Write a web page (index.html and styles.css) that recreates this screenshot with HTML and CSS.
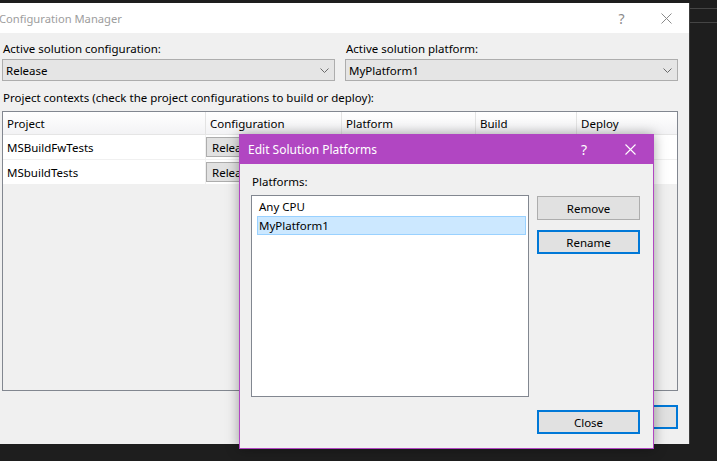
FILE: index.html
```html
<!DOCTYPE html>
<html>
<head>
<meta charset="utf-8">
<link rel="stylesheet" href="styles.css">
</head>
<body>
<div class="desk">
  <div class="bgwin"></div>
  <div class="win">
    <div class="titlebar">
      <span class="title">Configuration Manager</span>
      <div class="tb-btns">
        <span class="tb-btn help">?</span>
        <span class="tb-btn"><svg width="11" height="11" viewBox="0 0 11 11"><path d="M0.5 0.5L10.5 10.5M10.5 0.5L0.5 10.5" stroke="#8a8a8a" stroke-width="1" fill="none"/></svg></span>
      </div>
    </div>
    <div class="content">
      <div class="selectors">
        <div class="field">
          <div class="label">Active solution configuration:</div>
          <div class="combo"><span>Release</span><svg width="9" height="5" viewBox="0 0 9 5"><path d="M0.5 0.5L4.5 4.5L8.5 0.5" stroke="#6a6a6a" fill="none"/></svg></div>
        </div>
        <div class="field">
          <div class="label">Active solution platform:</div>
          <div class="combo"><span>MyPlatform1</span><svg width="9" height="5" viewBox="0 0 9 5"><path d="M0.5 0.5L4.5 4.5L8.5 0.5" stroke="#6a6a6a" fill="none"/></svg></div>
        </div>
      </div>
      <div class="label ctx">Project contexts (check the project configurations to build or deploy):</div>
      <div class="grid">
        <div class="row head">
          <div class="cell">Project</div>
          <div class="cell">Configuration</div>
          <div class="cell">Platform</div>
          <div class="cell">Build</div>
          <div class="cell last">Deploy</div>
        </div>
        <div class="row">
          <div class="cell">MSBuildFwTests</div>
          <div class="cell cfg"><div class="cellcombo">Release</div></div>
          <div class="cell"></div>
          <div class="cell"></div>
          <div class="cell last"></div>
        </div>
        <div class="row">
          <div class="cell">MSbuildTests</div>
          <div class="cell cfg"><div class="cellcombo">Release</div></div>
          <div class="cell"></div>
          <div class="cell"></div>
          <div class="cell last"></div>
        </div>
      </div>
      <div class="footer">
        <div class="btn focus main-close">Close</div>
      </div>
    </div>
  </div>

  <div class="dialog">
    <div class="dtitlebar">
      <span class="dtitle">Edit Solution Platforms</span>
      <div class="dtb-btns">
        <span class="dtb-btn help">?</span>
        <span class="dtb-btn"><svg width="11" height="11" viewBox="0 0 11 11"><path d="M0.5 0.5L10.5 10.5M10.5 0.5L0.5 10.5" stroke="#ffffff" stroke-width="1.1" fill="none"/></svg></span>
      </div>
    </div>
    <div class="dcontent">
      <div class="dmain">
        <div class="dleft">
          <div class="label">Platforms:</div>
          <div class="listbox">
            <div class="item">Any CPU</div>
            <div class="item sel">MyPlatform1</div>
          </div>
        </div>
        <div class="dbtns">
          <div class="btn">Remove</div>
          <div class="btn focus">Rename</div>
        </div>
      </div>
      <div class="dfooter">
        <div class="btn focus">Close</div>
      </div>
    </div>
  </div>
</div>
</body>
</html>
```

FILE: styles.css
```css
* { box-sizing: border-box; }
html, body {
  margin: 0;
  padding: 0;
  width: 717px;
  height: 461px;
  overflow: hidden;
  background: #1e1e1e;
  font-family: "Noto Sans", "Open Sans", sans-serif;
  font-size: 11.5px;
  color: #000;
}
.desk {
  position: relative;
  width: 717px;
  height: 461px;
}
.bgwin {
  position: absolute;
  left: 690px;
  top: 8px;
  width: 27px;
  height: 15px;
  border-top: 1px solid #454545;
  border-bottom: 1px solid #454545;
}
.win {
  position: absolute;
  left: 0;
  top: 3px;
  width: 690px;
  height: 441px;
  background: #f0f0f0;
  border-right: 1px solid #3c3c3c;
  display: flex;
  flex-direction: column;
}
.titlebar {
  height: 30px;
  background: #ffffff;
  display: flex;
  align-items: center;
  justify-content: space-between;
}
.title {
  color: #9d9d9d;
  margin-left: -1px;
  font-size: 11.2px;
}
.tb-btns { display: flex; }
.tb-btn {
  width: 46px;
  height: 30px;
  display: flex;
  align-items: center;
  justify-content: center;
  color: #8a8a8a;
}
.tb-btn.help { font-size: 14px; padding-left: 3px; }
.content {
  flex: 1;
  padding: 8px 11px 0 2px;
  display: flex;
  flex-direction: column;
}
.label {
  line-height: 16px;
  height: 16px;
  padding-left: 1px;
  white-space: nowrap;
}
.selectors {
  display: flex;
  gap: 10px;
}
.field {
  width: 333px;
  display: flex;
  flex-direction: column;
  gap: 2px;
}
.combo {
  height: 22px;
  background: #e5e5e5;
  border: 1px solid #adadad;
  display: flex;
  align-items: center;
  justify-content: space-between;
  padding: 0 5px 0 3px;
}
.combo svg { display: block; }
.ctx { margin-top: 9px; }
.grid {
  margin-top: 5px;
  height: 280px;
  border: 1px solid #828790;
  background: #f0f0f0;
}
.row {
  display: grid;
  grid-template-columns: 203px 136px 134px 101px 1fr;
  height: 25px;
  background: #ffffff;
  border-bottom: 1px solid #f0f0f0;
}
.row.head {
  height: 23px;
  background: linear-gradient(#ffffff, #f3f3f5);
  border-bottom: 1px solid #e5e5e5;
}
.cell {
  border-right: 1px solid #f0f0f0;
  padding-left: 4px;
  display: flex;
  align-items: center;
  white-space: nowrap;
  overflow: hidden;
}
.head .cell {
  border-right: 1px solid #e3e3e3;
  padding-left: 4px;
}
.cell.last { border-right: none; }
.cell.cfg { padding: 2px 1px 2px 0; align-items: stretch; }
.cellcombo {
  flex: 1;
  background: #e1e1e1;
  border: 1px solid #adadad;
  padding-left: 5px;
  display: flex;
  align-items: center;
}
.footer {
  margin-top: 14px;
  display: flex;
  justify-content: flex-end;
}
.btn {
  height: 24px;
  background: #e1e1e1;
  border: 1px solid #adadad;
  display: flex;
  align-items: center;
  justify-content: center;
}
.btn.focus { border: 2px solid #0078d7; }
.main-close { width: 103px; height: 24px; }

.dialog {
  position: absolute;
  left: 239px;
  top: 134px;
  width: 415px;
  height: 315px;
  border: 1px solid #b146c2;
  background: #f0f0f0;
  box-shadow: 0 0 12px rgba(0, 0, 0, 0.35);
  display: flex;
  flex-direction: column;
}
.dtitlebar {
  height: 30px;
  margin-top: -1px;
  background: #b146c2;
  display: flex;
  align-items: center;
  justify-content: space-between;
  color: #fff;
  padding-left: 8px;
}
.dtitle { font-size: 12px; }
.dtb-btns { display: flex; }
.dtb-btn {
  width: 46px;
  height: 30px;
  display: flex;
  align-items: center;
  justify-content: center;
}
.dtb-btn.help { font-size: 14px; }
.dcontent {
  flex: 1;
  padding: 10px 13px 0 11px;
  display: flex;
  flex-direction: column;
}
.dmain {
  display: flex;
  gap: 8px;
}
.dleft {
  width: 278px;
  display: flex;
  flex-direction: column;
  gap: 5px;
}
.listbox {
  height: 202px;
  background: #fff;
  border: 1px solid #828790;
  padding: 1px 2px 1px 5px;
}
.item {
  height: 19px;
  line-height: 17px;
  border: 1px solid transparent;
  padding-left: 1px;
}
.item.sel {
  background: #cce8ff;
  border-color: #99d1ff;
}
.dbtns {
  width: 103px;
  margin-top: 22px;
  display: flex;
  flex-direction: column;
  gap: 10px;
}
.dfooter {
  margin-top: 13px;
  display: flex;
  justify-content: flex-end;
}
.dfooter .btn { width: 103px; }
```
